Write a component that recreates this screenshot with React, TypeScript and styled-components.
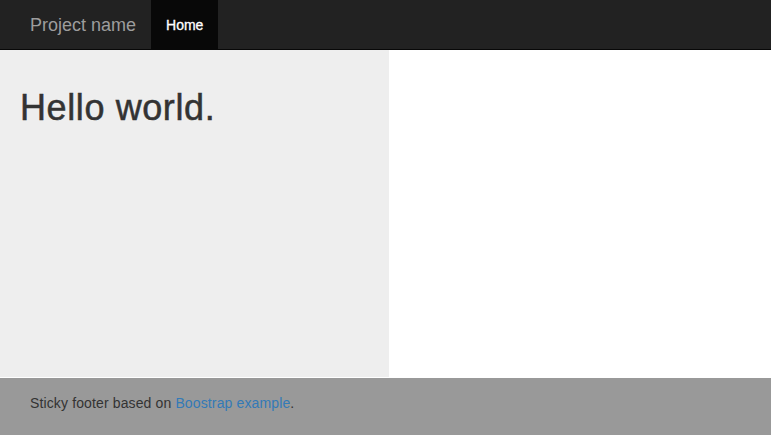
import React from "react";
import styled, { createGlobalStyle } from "styled-components";

const GlobalStyle = createGlobalStyle`
  html, body {
    margin: 0;
    padding: 0;
    background: #fff;
    font-family: "Liberation Sans", Arial, Helvetica, sans-serif;
    font-size: 14px;
    line-height: 20px;
    color: #333;
  }
`;

const Page = styled.div`
  display: flex;
  flex-direction: column;
  min-height: 435px;
`;

const Navbar = styled.nav`
  display: flex;
  align-items: stretch;
  height: 49px;
  padding: 0 15px;
  background: #222;
  border-bottom: 1px solid #080808;
`;

const Brand = styled.a`
  display: flex;
  align-items: center;
  padding: 0 15px;
  font-size: 18px;
  color: #9d9d9d;
  text-decoration: none;
`;

const NavLink = styled.a<{ $active?: boolean }>`
  display: flex;
  align-items: center;
  padding: 0 15px;
  font-size: 14px;
  color: ${(p) => (p.$active ? "#fff" : "#9d9d9d")};
  background: ${(p) => (p.$active ? "#080808" : "transparent")};
  text-decoration: none;
  -webkit-text-stroke: ${(p) => (p.$active ? "0.3px #fff" : "0")};
`;

const Main = styled.main`
  display: flex;
  height: 327px;
  margin-bottom: 1px;
`;

const Panel = styled.section`
  width: 389px;
  padding: 0 20px;
  box-sizing: border-box;
  background: #eee;
`;

const Title = styled.h1`
  margin: 38px 0 0;
  font-size: 36px;
  line-height: 1.1;
  font-weight: 500;
  letter-spacing: 0.6px;
  -webkit-text-stroke: 0.5px #333;
  color: #333;
`;

const Footer = styled.footer`
  height: 60px;
  padding: 15px 30px;
  box-sizing: border-box;
  background: #999;
`;

const FooterText = styled.p`
  margin: 0;
  color: #333;
  letter-spacing: 0.13px;
`;

const FooterLink = styled.a`
  color: #337ab7;
  text-decoration: none;
`;

export default function App() {
  return (
    <Page>
      <GlobalStyle />
      <Navbar>
        <Brand href="#">Project name</Brand>
        <NavLink href="#" $active>
          Home
        </NavLink>
      </Navbar>
      <Main>
        <Panel>
          <Title>Hello world.</Title>
        </Panel>
      </Main>
      <Footer>
        <FooterText>
          Sticky footer based on <FooterLink href="#">Boostrap example</FooterLink>.
        </FooterText>
      </Footer>
    </Page>
  );
}
